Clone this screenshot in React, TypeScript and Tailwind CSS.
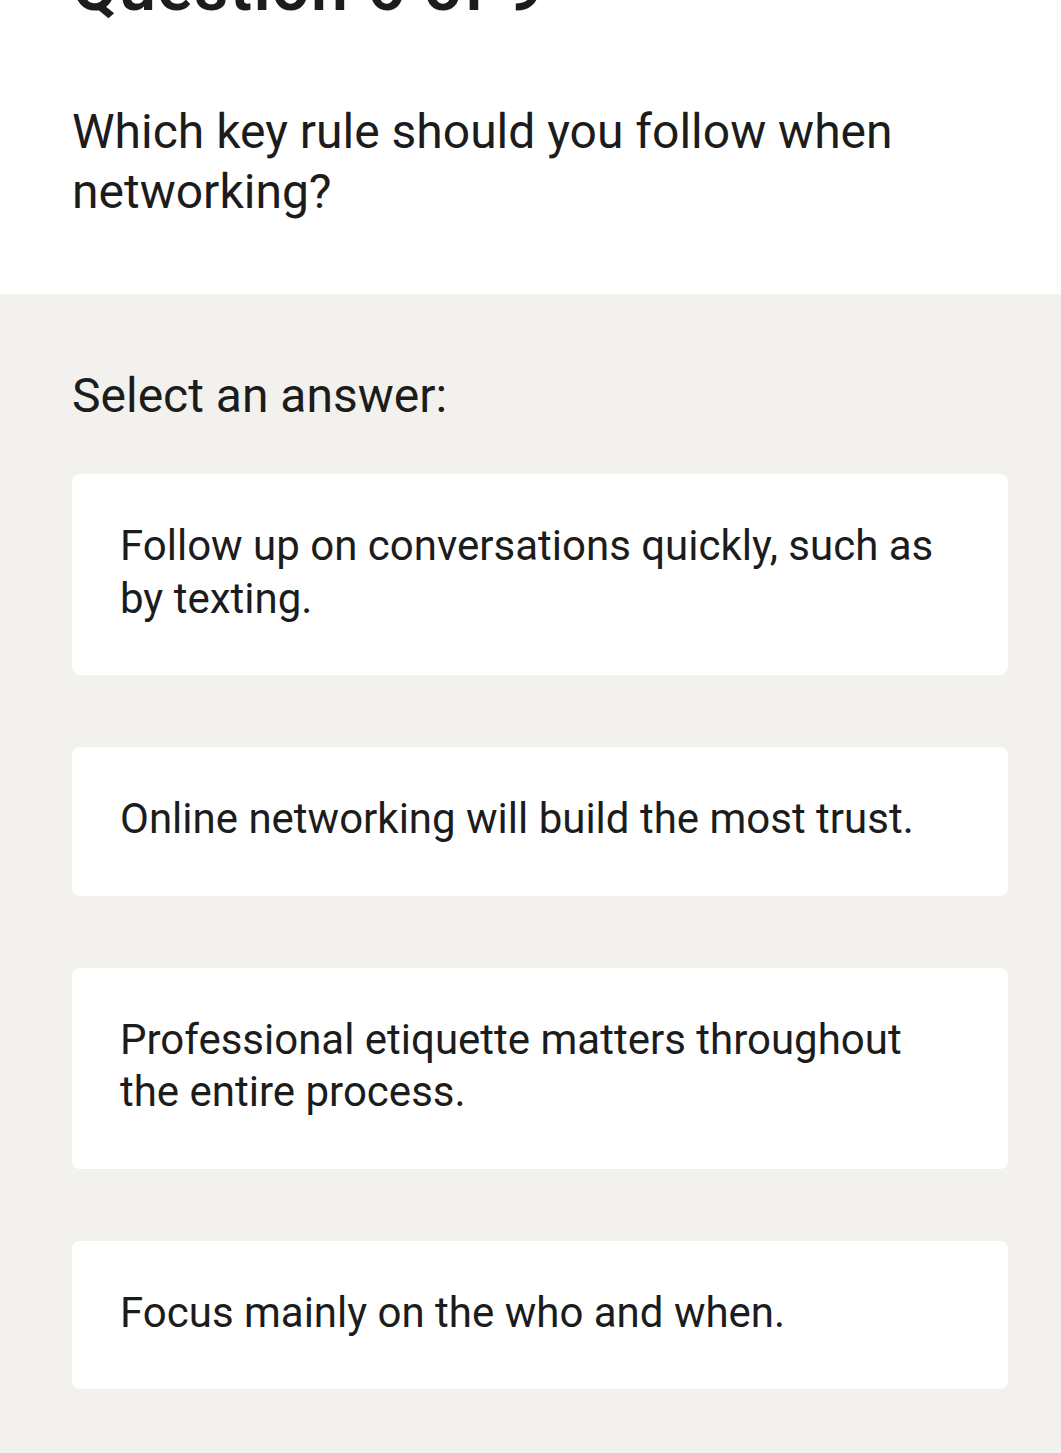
const answers = [
  "Follow up on conversations quickly, such as by texting.",
  "Online networking will build the most trust.",
  "Professional etiquette matters throughout the entire process.",
  "Focus mainly on the who and when.",
]

export default function App() {
  return (
    <div className="min-h-screen overflow-hidden bg-[#f2f1ed] font-['Roboto',sans-serif] text-[#1c1c1c]">
      {/* question header */}
      <section className="bg-white pl-[72px] pr-[53px] pb-[72px]">
        <h1 className="-mt-[48px] text-[66px] font-semibold leading-[72px] tracking-[1.5px]">Question 6 of 9</h1>
        <p className="mt-[78px] text-[48px] leading-[60px]">
          Which key rule should you follow when networking?
        </p>
      </section>

      {/* answers */}
      <section className="pl-[72px] pr-[53px] pt-[72px] pb-[64px]">
        <p className="text-[48px] leading-[60px]">Select an answer:</p>
        <div className="mt-[48px] flex flex-col gap-[72px]">
          {answers.map((a) => (
            <button
              key={a}
              className="rounded-[8px] bg-white px-[48px] pt-[46px] pb-[50px] text-left text-[42px] leading-[52.5px]"
            >
              {a}
            </button>
          ))}
        </div>
      </section>
    </div>
  )
}
